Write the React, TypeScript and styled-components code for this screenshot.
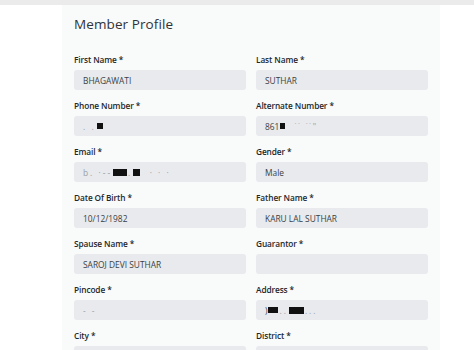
import React from "react";
import styled, { createGlobalStyle } from "styled-components";

const Global = createGlobalStyle`
  html, body { margin: 0; padding: 0; background: #ffffff; }
  body { font-family: "Open Sans", "Noto Sans", sans-serif; overflow: hidden; }
`;

const TopStrip = styled.div`
  height: 5px;
  background: #ebebeb;
`;

const Page = styled.div`
  display: flex;
  padding-left: 62px;
`;

const Card = styled.div`
  width: 378px;
  box-sizing: border-box;
  background: #f9fafa;
  padding: 11px 12px 0 12px;
  height: 345px;
`;

const Title = styled.h2`
  margin: 0 0 21px 0;
  font-size: 13.5px;
  line-height: 16px;
  font-weight: 400;
  color: #2f3338;
  letter-spacing: 0.1px;
`;

const Grid = styled.div`
  display: grid;
  grid-template-columns: 172px 172px;
  grid-auto-rows: 37px;
  column-gap: 10px;
  row-gap: 9px;
`;

const Field = styled.div`
  display: flex;
  flex-direction: column;
`;

const Label = styled.label`
  display: block;
  height: 14px;
  font-size: 8.3px;
  line-height: 14px;
  font-weight: 600;
  color: #23272b;
  margin-bottom: 3px;
  letter-spacing: -0.1px;
`;

const Input = styled.div`
  height: 20px;
  background: #e8eaed;
  border-radius: 3px;
  display: flex;
  align-items: center;
  padding-left: 9px;
  font-size: 8.4px;
  color: #3a3f44;
  gap: 1px;
  white-space: nowrap;
  overflow: hidden;
`;

const Redact = styled.span<{ w: number; h?: number }>`
  display: inline-block;
  width: ${(p) => p.w}px;
  height: ${(p) => p.h ?? 7}px;
  background: #111;
`;

const Faint = styled.span`
  color: #9aa0a6;
  letter-spacing: 2px;
`;

type F = { label: string; value: React.ReactNode };

const fields: F[] = [
  { label: "First Name *", value: "BHAGAWATI" },
  { label: "Last Name *", value: "SUTHAR" },
  {
    label: "Phone Number *",
    value: (
      <>
        <Faint>. .</Faint>
        <Redact w={6} h={6} />
      </>
    ),
  },
  {
    label: "Alternate Number *",
    value: (
      <>
        <span>861</span>
        <Redact w={5} h={6} />
        <Faint>&nbsp;&nbsp;˙˙ ˙˙"</Faint>
      </>
    ),
  },
  {
    label: "Email *",
    value: (
      <>
        <Faint>b. ·‑‑</Faint>
        <Redact w={14} h={7} />
        <Faint>.</Faint>
        <Redact w={7} h={7} />
        <Faint>&nbsp;&nbsp;· · ·</Faint>
      </>
    ),
  },
  { label: "Gender *", value: "Male" },
  { label: "Date Of Birth *", value: "10/12/1982" },
  { label: "Father Name *", value: "KARU LAL SUTHAR" },
  { label: "Spause Name *", value: "SAROJ DEVI SUTHAR" },
  { label: "Guarantor *", value: "" },
  { label: "Pincode *", value: <Faint>- -</Faint> },
  {
    label: "Address *",
    value: (
      <>
        <span>)</span>
        <Redact w={10} h={6} />
        <Faint>..</Faint>
        <Redact w={15} h={7} />
        <Faint>...</Faint>
      </>
    ),
  },
  { label: "City *", value: "" },
  { label: "District *", value: "" },
];

export default function App() {
  return (
    <>
      <Global />
      <TopStrip />
      <Page>
        <Card>
          <Title>Member Profile</Title>
          <Grid>
            {fields.map((f) => (
              <Field key={f.label}>
                <Label>{f.label}</Label>
                <Input>{f.value}</Input>
              </Field>
            ))}
          </Grid>
        </Card>
      </Page>
    </>
  );
}
